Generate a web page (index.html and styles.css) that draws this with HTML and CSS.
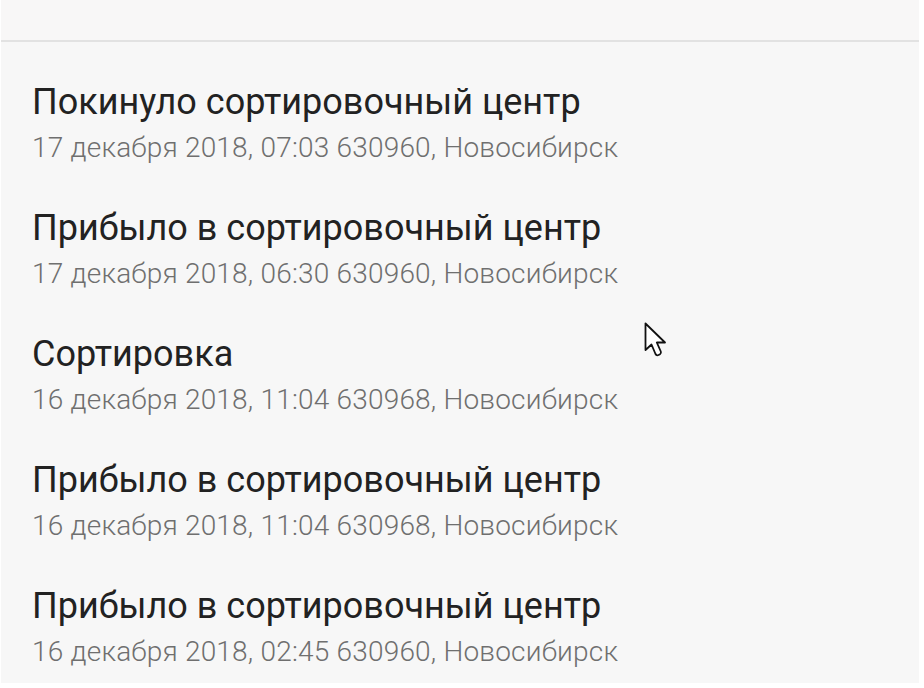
FILE: index.html
```html
<!DOCTYPE html>
<html lang="ru">
<head>
<meta charset="utf-8">
<link rel="stylesheet" href="styles.css">
</head>
<body>
<div class="panel">
  <div class="header"></div>
  <ul class="events">
    <li class="event">
      <div class="title">Покинуло сортировочный центр</div>
      <div class="meta">17 декабря 2018, 07:03 630960, Новосибирск</div>
    </li>
    <li class="event">
      <div class="title">Прибыло в сортировочный центр</div>
      <div class="meta">17 декабря 2018, 06:30 630960, Новосибирск</div>
    </li>
    <li class="event">
      <div class="title">Сортировка</div>
      <div class="meta">16 декабря 2018, 11:04 630968, Новосибирск</div>
    </li>
    <li class="event">
      <div class="title">Прибыло в сортировочный центр</div>
      <div class="meta">16 декабря 2018, 11:04 630968, Новосибирск</div>
    </li>
    <li class="event">
      <div class="title">Прибыло в сортировочный центр</div>
      <div class="meta">16 декабря 2018, 02:45 630960, Новосибирск</div>
    </li>
  </ul>
  <svg class="cursor" width="24" height="38" viewBox="0 0 24 38">
    <path d="M1.5 1.5 L1.5 28 L7.5 22.5 L11.5 32 Q12.5 34 14.5 33 L16 32.2 Q17.5 31.3 16.8 29.5 L12.8 20.5 L21 20.5 Z" fill="#fff" stroke="#111" stroke-width="1.8" stroke-linejoin="round"/>
  </svg>
</div>
</body>
</html>
```
FILE: styles.css
```css
html, body {
  margin: 0;
  padding: 0;
  background: #ffffff;
}
body {
  width: 924px;
  height: 688px;
  overflow: hidden;
  font-family: Roboto, "Noto Sans", sans-serif;
}
.panel {
  position: relative;
  width: 918px;
  height: 683px;
  background: #f7f7f7;
  margin-left: 1px;
}
.header {
  height: 40px;
  border-bottom: 2px solid #e2e2e2;
  background: #f8f7f7;
}
.events {
  list-style: none;
  margin: 0;
  padding: 38px 0 0 31px;
}
.event {
  height: 126px;
}
.title {
  font-size: 36px;
  line-height: 44px;
  color: #222222;
}
.meta {
  font-size: 28px;
  font-weight: 300;
  letter-spacing: 0.2px;
  line-height: 32px;
  color: #6f6f6f;
  margin-top: 8px;
}
.cursor {
  position: absolute;
  left: 643px;
  top: 322px;
}
```
